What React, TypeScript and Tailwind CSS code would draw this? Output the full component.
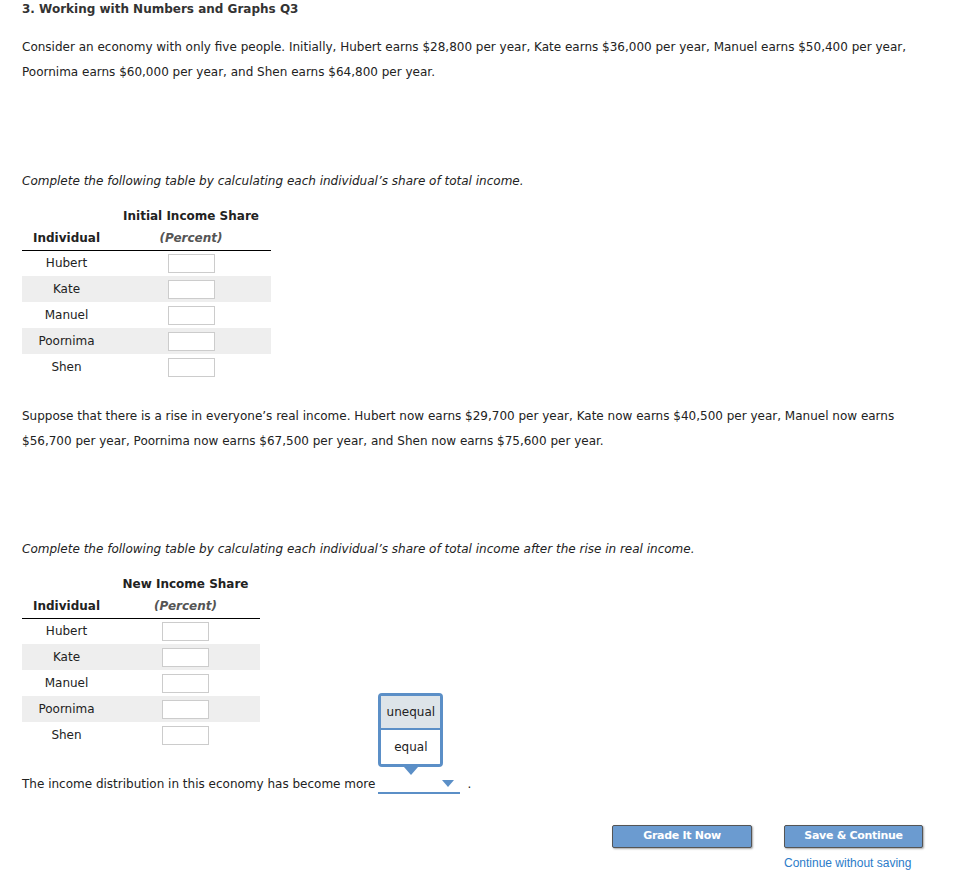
import React from 'react'

const font = { fontFamily: '"DejaVu Sans", Verdana, sans-serif' }

const people = ['Hubert', 'Kate', 'Manuel', 'Poornima', 'Shen']

const ShareTable = ({ title, width }: { title: string; width: string }) => {
  return (
    <table className={`${width} border-collapse text-[12px] text-[#222]`}>
      <thead>
        <tr className="h-[23px]">
          <th className="w-[89px]"></th>
          <th className="font-bold text-center align-middle">{title}</th>
        </tr>
        <tr className="h-[23px] border-b border-black">
          <th className="font-bold text-center align-middle">Individual</th>
          <th className="font-bold italic text-[#555] text-center align-middle">(Percent)</th>
        </tr>
      </thead>
      <tbody>
        {people.map((p, i) => (
          <tr key={p} className={`h-[26px] ${i % 2 === 1 ? 'bg-[#eeeeee]' : 'bg-white'}`}>
            <td className="text-center align-middle font-normal">{p}</td>
            <td className="text-center align-middle">
              <input type="text" className="w-[47px] h-[19px] border border-[#cccccc] bg-white align-middle" />
            </td>
          </tr>
        ))}
      </tbody>
    </table>
  )
}

export default function App() {
  return (
    <div className="w-[957px] h-[888px] bg-white text-[12px] text-[#222] overflow-hidden" style={font}>
      <div className="px-[22px]">
        <h1 className="text-[12px] font-bold leading-[16px] text-[#333] pt-[1px]">3. Working with Numbers and Graphs Q3</h1>

        <p className="mt-[18px] leading-[25px]">
          Consider an economy with only five people. Initially, Hubert earns $28,800 per year, Kate earns $36,000 per year, Manuel earns $50,400 per year, Poornima earns $60,000 per year, and Shen earns $64,800 per year.
        </p>

        <p className="mt-[84px] leading-[25px] italic">
          Complete the following table by calculating each individual’s share of total income.
        </p>

        <div className="mt-[10px]">
          <ShareTable title="Initial Income Share" width="w-[249px]" />
        </div>

        <p className="mt-[24px] leading-[25px]">
          Suppose that there is a rise in everyone’s real income. Hubert now earns $29,700 per year, Kate now earns $40,500 per year, Manuel now earns $56,700 per year, Poornima now earns $67,500 per year, and Shen now earns $75,600 per year.
        </p>

        <p className="mt-[83px] leading-[25px] italic">
          Complete the following table by calculating each individual’s share of total income after the rise in real income.
        </p>

        <div className="mt-[10px]">
          <ShareTable title="New Income Share" width="w-[238px]" />
        </div>

        <div className="mt-[23px] flex items-center h-[25px]">
          <span>The income distribution in this economy has become more</span>
          <span className="relative ml-[3px] inline-block w-[82px] h-[20px] border-b-2 border-[#5b8fc7]">
            <span className="absolute right-[6px] top-[6px] w-0 h-0 border-l-[6px] border-r-[6px] border-t-[7px] border-l-transparent border-r-transparent border-t-[#5b8fc7]"></span>
            <div className="absolute left-0 bottom-[17px] w-[65px]">
              <div className="rounded-[4px] border-[3px] border-[#5b8fc7] bg-white overflow-hidden">
                <div className="h-[34px] flex items-center justify-center bg-[#dde4e9] border-b-2 border-[#5b8fc7]">unequal</div>
                <div className="h-[34px] flex items-center justify-center bg-white">equal</div>
              </div>
              <div className="mx-auto w-0 h-0 border-l-[7px] border-r-[7px] border-t-[8px] border-l-transparent border-r-transparent border-t-[#5b8fc7]"></div>
            </div>
          </span>
          <span className="ml-[7px]">.</span>
        </div>
      </div>

      <div className="mt-[29px] flex justify-end pr-[34px] gap-[32px]">
        <div>
          <button className="w-[140px] h-[23px] rounded-[2px] border border-[#555] bg-[#6b9bd0] text-white font-bold text-[11px] tracking-[-0.3px] shadow-[1px_1px_2px_rgba(0,0,0,0.35)]">
            Grade It Now
          </button>
        </div>
        <div className="flex flex-col">
          <button className="w-[139px] h-[23px] rounded-[2px] border border-[#555] bg-[#6b9bd0] text-white font-bold text-[11px] tracking-[-0.3px] shadow-[1px_1px_2px_rgba(0,0,0,0.35)]">
            Save &amp; Continue
          </button>
          <a href="#" className="mt-[8px] text-[12px] text-[#2b7bc9] leading-[15px]" style={{ fontFamily: '"Liberation Sans", Arial, sans-serif' }}>
            Continue without saving
          </a>
        </div>
      </div>
    </div>
  )
}
